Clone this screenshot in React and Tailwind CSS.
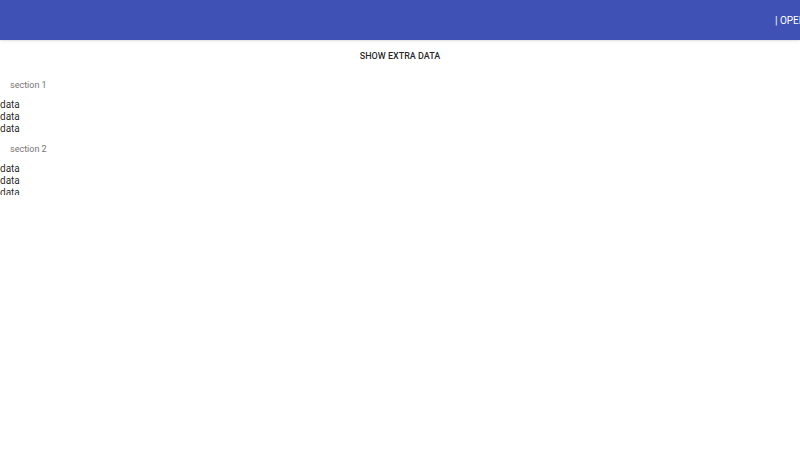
export default function App() {
  const sections = ["section 1", "section 2", "section 3"];
  return (
    <div className="w-[800px] h-[450px] bg-white overflow-hidden" style={{ fontFamily: "Roboto, 'Noto Sans', sans-serif" }}>
      <div className="h-10 bg-[#3f51b5] flex items-center overflow-hidden shadow-sm">
        <span className="ml-[775px] whitespace-nowrap text-white text-[10px]">| OPEN</span>
      </div>
      <div className="h-[30px] pt-[3px] flex items-center justify-center">
        <span className="text-[9px] font-medium text-[rgba(0,0,0,0.87)]">SHOW EXTRA DATA</span>
      </div>
      <div className="h-[125px] overflow-hidden">
        {sections.map((s) => (
          <div key={s}>
            <div className="h-7 pt-1 flex items-center pl-[10px] text-[9px] text-[#757575]">{s}</div>
            <div className="mt-px -mb-px text-[10px] leading-[12px] text-[rgba(0,0,0,0.87)]">
              <div>data</div>
              <div>data</div>
              <div>data</div>
            </div>
          </div>
        ))}
      </div>
    </div>
  );
}
